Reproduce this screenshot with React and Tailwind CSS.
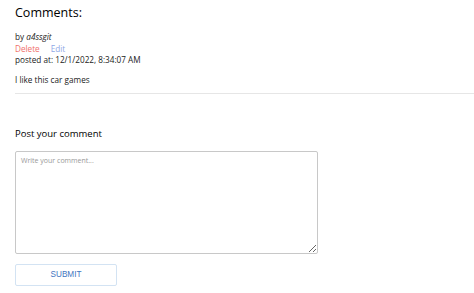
import React from 'react';

const App = () => {
  return (
    <div className="min-h-screen bg-white pl-[15px] pt-[5px] text-[#222]" style={{ fontFamily: '"Open Sans", sans-serif' }}>
      <h2 className="text-[12.5px] leading-[16px] font-normal text-black">Comments:</h2>

      <div className="mt-[10px] text-[8.2px] leading-[11.5px]">
        <div>
          by <span className="italic">a4ssgit</span>
        </div>
        <div className="flex gap-[11px]">
          <button type="button" className="text-[#f0706c]">Delete</button>
          <button type="button" className="text-[#8fa8e6]">Edit</button>
        </div>
        <div>posted at: 12/1/2022, 8:34:07 AM</div>
        <p className="mt-[8.5px]">I like this car games</p>
      </div>

      <div className="mt-[7.5px] h-[1px] bg-[#e6e6e6]"></div>

      <h3 className="mt-[33px] text-[9.5px] leading-[14px] text-black">Post your comment</h3>

      <textarea
        placeholder="Write your comment..."
        className="mt-[10px] block w-[303px] h-[103px] border border-[#c8c8c8] rounded-[2px] px-[5px] py-[4px] text-[7px] leading-[10px] placeholder:text-[#999] outline-none"
      />

      <button
        type="button"
        className="mt-[10px] w-[102px] h-[22px] border border-[#d3e3f3] rounded-[2px] text-[8.2px] text-[#3f74c0]"
        style={{ fontFamily: '"Liberation Sans", Arial, sans-serif' }}
      >
        SUBMIT
      </button>
    </div>
  );
};

export default App;
